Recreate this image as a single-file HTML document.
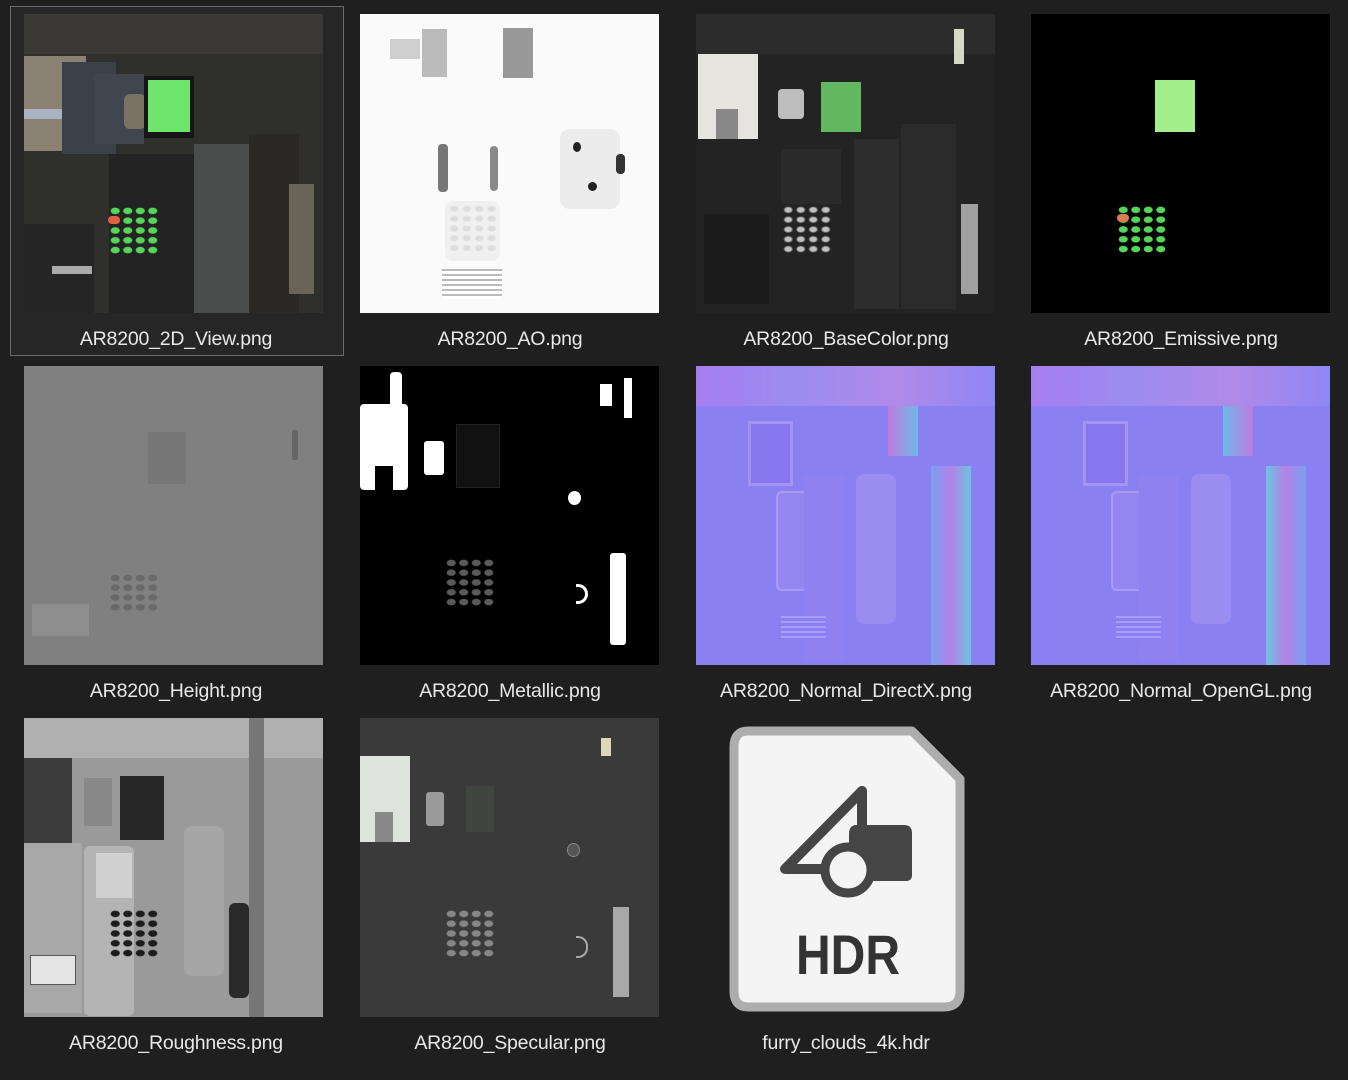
<!DOCTYPE html>
<html><head><meta charset="utf-8"><style>
*{margin:0;padding:0;box-sizing:border-box}
body{width:1348px;height:1080px;background:#1f1f1f;position:relative;overflow:hidden;font-family:"Liberation Sans",sans-serif}
.t{position:absolute;width:299px;height:299px;overflow:hidden}
.t div{position:absolute}
.l{position:absolute;width:340px;text-align:center;color:#e8e8e8;font-size:19.5px;letter-spacing:-0.2px}
.sel{position:absolute;left:10px;top:6px;width:334px;height:350px;border:1px solid #6a6a6a;background:#262626}
.kp{background-image:radial-gradient(ellipse 5px 3.6px at center,#55d65a 80%,transparent 100%);background-size:12.5px 9.8px}
.kpg{background-image:radial-gradient(ellipse 5px 3.6px at center,#5a5a5a 80%,transparent 100%);background-size:12.5px 9.8px}
.kpd{background-image:radial-gradient(ellipse 5px 3.6px at center,#1c1c1c 80%,transparent 100%);background-size:12.5px 9.8px}
.kpl{background-image:radial-gradient(ellipse 5px 3.6px at center,#dcdcdc 60%,transparent 100%);background-size:12.5px 9.8px}
</style></head><body>
<div class="sel"></div>

<!-- Row1 -->
<div class="t" style="left:24px;top:14px;background:#2f2f2c">
 <div style="left:0;top:0;width:299px;height:40px;background:#3a3936"></div>
 <div style="left:0;top:42px;width:62px;height:95px;background:#8b8273"></div>
 <div style="left:0;top:95px;width:62px;height:10px;background:#a9b3c3"></div>
 <div style="left:38px;top:48px;width:54px;height:92px;background:#3c4048"></div>
 <div style="left:70px;top:60px;width:50px;height:70px;background:#41454d"></div>
 <div style="left:100px;top:80px;width:22px;height:35px;background:#7b7165;border-radius:6px"></div>
 <div style="left:120px;top:62px;width:50px;height:62px;background:#151515"></div>
 <div style="left:124px;top:66px;width:42px;height:52px;background:#6ee56b"></div>
 <div style="left:85px;top:140px;width:85px;height:160px;background:#232323"></div>
 <div style="left:170px;top:130px;width:55px;height:169px;background:#4b4d4d"></div>
 <div style="left:225px;top:120px;width:50px;height:179px;background:#2a2925"></div>
 <div style="left:265px;top:170px;width:25px;height:110px;background:#6a6458"></div>
 <div style="left:0;top:210px;width:70px;height:89px;background:#252525"></div>
 <div class="kp" style="left:85px;top:192px;width:50px;height:49px"></div>
 <div style="left:84px;top:202px;width:12px;height:8px;border-radius:4px;background:#e06040"></div>
 <div style="left:28px;top:252px;width:40px;height:8px;background:#aaa"></div>
</div>
<div class="l" style="left:6px;top:328px">AR8200_2D_View.png</div>

<div class="t" style="left:360px;top:14px;background:#fafafa">
 <div style="left:30px;top:25px;width:30px;height:20px;background:#cfcfcf"></div>
 <div style="left:62px;top:15px;width:25px;height:48px;background:#bbb"></div>
 <div style="left:143px;top:14px;width:30px;height:50px;background:#999"></div>
 <div style="left:78px;top:130px;width:10px;height:48px;background:#777;border-radius:4px"></div>
 <div style="left:130px;top:132px;width:8px;height:45px;background:#888;border-radius:4px"></div>
 <div style="left:200px;top:115px;width:60px;height:80px;background:#ececec;border-radius:10px"></div>
 <div style="left:213px;top:128px;width:8px;height:10px;background:#222;border-radius:50%"></div>
 <div style="left:228px;top:168px;width:9px;height:9px;background:#222;border-radius:50%"></div>
 <div style="left:256px;top:140px;width:9px;height:20px;background:#333;border-radius:4px"></div>
 <div style="left:85px;top:187px;width:55px;height:60px;border-radius:8px;background:#f0f0f0"></div>
 <div class="kpl" style="left:88px;top:190px;width:50px;height:49px"></div>
 <div style="left:82px;top:255px;width:60px;height:30px;background:repeating-linear-gradient(#bbb 0 2px,#fff 2px 5px)"></div>
</div>
<div class="l" style="left:340px;top:328px">AR8200_AO.png</div>

<div class="t" style="left:696px;top:14px;background:#232323">
 <div style="left:0;top:0;width:299px;height:40px;background:#2c2c2c"></div>
 <div style="left:2px;top:40px;width:60px;height:85px;background:#e6e4df"></div>
 <div style="left:20px;top:95px;width:22px;height:30px;background:#888"></div>
 <div style="left:82px;top:75px;width:26px;height:30px;background:#bdbdbd;border-radius:4px"></div>
 <div style="left:125px;top:68px;width:40px;height:50px;background:#62b760"></div>
 <div style="left:85px;top:135px;width:60px;height:55px;background:#2a2a2a"></div>
 <div style="left:158px;top:125px;width:45px;height:170px;background:#2d2d2d"></div>
 <div style="left:205px;top:110px;width:55px;height:185px;background:#2b2b2b"></div>
 <div style="left:258px;top:15px;width:10px;height:35px;background:#d8d8c8"></div>
 <div style="left:265px;top:190px;width:17px;height:90px;background:#a0a0a0"></div>
 <div style="left:8px;top:200px;width:65px;height:90px;background:#1c1c1c"></div>
 <div class="kpl" style="left:86px;top:191px;width:50px;height:49px;opacity:.85"></div>
</div>
<div class="l" style="left:676px;top:328px">AR8200_BaseColor.png</div>

<div class="t" style="left:1031px;top:14px;background:#000">
 <div style="left:124px;top:66px;width:40px;height:52px;background:#a4ef8c"></div>
 <div class="kp" style="left:86px;top:191px;width:50px;height:49px"></div>
 <div style="left:86px;top:200px;width:12px;height:8px;border-radius:4px;background:#d8804d"></div>
</div>
<div class="l" style="left:1011px;top:328px">AR8200_Emissive.png</div>

<!-- Row2 -->
<div class="t" style="left:24px;top:366px;background:#808080">
 <div style="left:124px;top:66px;width:38px;height:52px;background:#777"></div>
 <div style="left:268px;top:64px;width:6px;height:30px;background:#666;border-radius:2px"></div>
 <div class="kpg" style="left:85px;top:207px;width:50px;height:40px;opacity:.6"></div>
 <div style="left:8px;top:238px;width:57px;height:32px;background:#8e8e8e"></div>
</div>
<div class="l" style="left:6px;top:680px">AR8200_Height.png</div>

<div class="t" style="left:360px;top:366px;background:#000">
 <div style="left:0;top:38px;width:48px;height:86px;background:#fff;border-radius:4px"></div>
 <div style="left:30px;top:6px;width:12px;height:40px;background:#fff;border-radius:4px"></div>
 <div style="left:15px;top:100px;width:18px;height:25px;background:#000"></div>
 <div style="left:64px;top:75px;width:20px;height:34px;background:#fff;border-radius:3px"></div>
 <div style="left:96px;top:58px;width:44px;height:64px;border:1px solid #222;background:#111"></div>
 <div style="left:208px;top:125px;width:13px;height:14px;background:#fff;border-radius:50%"></div>
 <div style="left:240px;top:18px;width:12px;height:22px;background:#fff"></div>
 <div style="left:264px;top:12px;width:8px;height:40px;background:#fff"></div>
 <div style="left:250px;top:187px;width:16px;height:92px;background:#fff;border-radius:3px"></div>
 <div class="kpg" style="left:85px;top:192px;width:50px;height:49px"></div>
 <div style="left:216px;top:218px;width:12px;height:20px;border:3px solid #fff;border-left:none;border-radius:0 10px 10px 0"></div>
</div>
<div class="l" style="left:340px;top:680px">AR8200_Metallic.png</div>

<div class="t" style="left:696px;top:366px;background:#8a80f2">
 <div style="left:0;top:0;width:299px;height:40px;background:linear-gradient(90deg,#a77ef0,#9b8cf0,#b08ae8,#8f86f5)"></div>
 <div style="left:52px;top:55px;width:45px;height:65px;border:3px solid #a295ef;background:#8776ee"></div>
 <div style="left:192px;top:40px;width:30px;height:50px;background:linear-gradient(90deg,#c07ae0,#70b8e8)"></div>
 <div style="left:80px;top:125px;width:58px;height:100px;border:2px solid #a79af0;background:#9386f0;border-radius:6px"></div>
 <div style="left:108px;top:110px;width:40px;height:185px;background:#8f81f0"></div>
 <div style="left:160px;top:108px;width:40px;height:150px;background:#9a8cf0;border-radius:8px"></div>
 <div style="left:235px;top:100px;width:40px;height:199px;background:linear-gradient(90deg,#7aa0f0,#b380e8,#6cc4e0)"></div>
 <div style="left:85px;top:250px;width:45px;height:25px;background:repeating-linear-gradient(#a99ef5 0 2px,#8a80f2 2px 5px)"></div>
</div>
<div class="l" style="left:676px;top:680px">AR8200_Normal_DirectX.png</div>

<div class="t" style="left:1031px;top:366px;background:#8a80f2">
 <div style="left:0;top:0;width:299px;height:40px;background:linear-gradient(90deg,#a77ef0,#9b8cf0,#b08ae8,#8f86f5)"></div>
 <div style="left:52px;top:55px;width:45px;height:65px;border:3px solid #a295ef;background:#8776ee"></div>
 <div style="left:192px;top:40px;width:30px;height:50px;background:linear-gradient(90deg,#70b8e8,#c07ae0)"></div>
 <div style="left:80px;top:125px;width:58px;height:100px;border:2px solid #a79af0;background:#9386f0;border-radius:6px"></div>
 <div style="left:108px;top:110px;width:40px;height:185px;background:#8f81f0"></div>
 <div style="left:160px;top:108px;width:40px;height:150px;background:#9a8cf0;border-radius:8px"></div>
 <div style="left:235px;top:100px;width:40px;height:199px;background:linear-gradient(90deg,#6cc4e0,#b380e8,#7aa0f0)"></div>
 <div style="left:85px;top:250px;width:45px;height:25px;background:repeating-linear-gradient(#a99ef5 0 2px,#8a80f2 2px 5px)"></div>
</div>
<div class="l" style="left:1011px;top:680px">AR8200_Normal_OpenGL.png</div>

<!-- Row3 -->
<div class="t" style="left:24px;top:718px;background:#9a9a9a">
 <div style="left:0;top:0;width:299px;height:40px;background:#b0b0b0"></div>
 <div style="left:0;top:40px;width:48px;height:85px;background:#3c3c3c"></div>
 <div style="left:96px;top:58px;width:44px;height:64px;background:#262626"></div>
 <div style="left:60px;top:60px;width:28px;height:48px;background:#888"></div>
 <div style="left:0;top:125px;width:58px;height:170px;background:#a8a8a8"></div>
 <div style="left:60px;top:128px;width:50px;height:170px;background:#b4b4b4;border-radius:6px"></div>
 <div style="left:72px;top:135px;width:36px;height:45px;background:#d0d0d0"></div>
 <div style="left:160px;top:108px;width:40px;height:150px;background:#a6a6a6;border-radius:8px"></div>
 <div style="left:205px;top:185px;width:20px;height:95px;background:#2a2a2a;border-radius:6px"></div>
 <div style="left:225px;top:0;width:15px;height:299px;background:#777"></div>
 <div class="kpd" style="left:85px;top:191px;width:50px;height:49px"></div>
 <div style="left:6px;top:237px;width:46px;height:30px;background:#e4e4e4;border:1px solid #555"></div>
</div>
<div class="l" style="left:6px;top:1032px">AR8200_Roughness.png</div>

<div class="t" style="left:360px;top:718px;background:#3a3a3a">
 <div style="left:0;top:38px;width:50px;height:86px;background:#dfe3de"></div>
 <div style="left:15px;top:94px;width:18px;height:30px;background:#888"></div>
 <div style="left:66px;top:74px;width:18px;height:34px;background:#9a9a9a;border-radius:3px"></div>
 <div style="left:106px;top:68px;width:28px;height:46px;background:#3e463e"></div>
 <div style="left:207px;top:125px;width:13px;height:14px;border:1px solid #888;background:#555;border-radius:50%"></div>
 <div style="left:241px;top:20px;width:10px;height:18px;background:#dcd8b8"></div>
 <div style="left:253px;top:189px;width:16px;height:90px;background:#a8a8a8"></div>
 <div class="kpg" style="left:85px;top:191px;width:50px;height:49px;opacity:.9;filter:brightness(1.6)"></div>
 <div style="left:216px;top:218px;width:12px;height:22px;border:2px solid #aaa;border-left:none;border-radius:0 10px 10px 0"></div>
</div>
<div class="l" style="left:340px;top:1032px">AR8200_Specular.png</div>

<svg style="position:absolute;left:728px;top:723px" width="240" height="292" viewBox="0 0 240 292">
 <path d="M20 8 H184 L232 56 V268 Q232 284 216 284 H20 Q6 284 6 268 V24 Q6 8 20 8 Z" fill="#f4f4f4" stroke="#adadad" stroke-width="9" stroke-linejoin="round"/>
 <path d="M134 68 L57 146 H100" fill="none" stroke="#454545" stroke-width="10" stroke-linejoin="round" stroke-linecap="round"/>
 <path d="M134 68 V106" stroke="#454545" stroke-width="10" stroke-linecap="round"/>
 <path d="M127 102 Q121 103 121 111 L121 124 L145 158 L178 158 Q184 158 184 152 V110 Q184 102 176 102 Z" fill="#454545"/>
 <circle cx="120" cy="147" r="23" fill="#f4f4f4" stroke="#454545" stroke-width="9"/>
 <text x="68" y="251" textLength="104" lengthAdjust="spacingAndGlyphs" font-family="Liberation Sans, sans-serif" font-weight="bold" font-size="56" fill="#333">HDR</text>
</svg>
<div class="l" style="left:676px;top:1032px">furry_clouds_4k.hdr</div>
</body></html>
